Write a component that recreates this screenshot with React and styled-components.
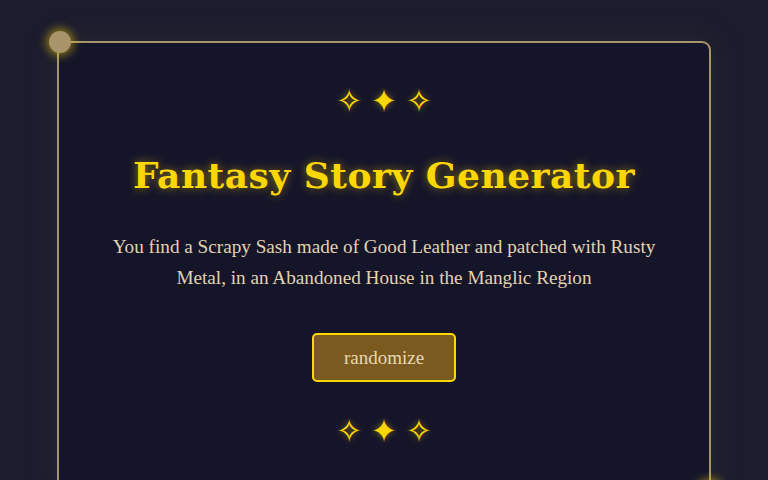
import styled, { createGlobalStyle } from "styled-components";

const Global = createGlobalStyle`
  html, body {
    margin: 0;
    padding: 0;
    background: #1c1c2e;
    height: 100%;
    overflow: hidden;
  }
  body {
    font-family: "Liberation Serif", Georgia, serif;
  }
`

const Page = styled.div`
  padding: 41px 57px 0;
`

const Card = styled.div`
  position: relative;
  background: #15152a;
  border: 2px solid #a8946a;
  border-radius: 9px;
  padding: 42px 40px 44px;
  box-shadow: 0 0 30px rgba(60, 55, 50, 0.45);
  text-align: center;
`

const Dot = styled.span`
  position: absolute;
  width: 22px;
  height: 22px;
  border-radius: 50%;
  background: ${p => p.$corner === "tl" ? "#a8946a" : "#c9a838"};
  box-shadow: 0 0 8px 3px rgba(255, 215, 0, 0.45);
  ${p => p.$corner === "tl" ? "top: -12px; left: -10px;" : "bottom: -12px; right: -12px;"}
`

const Stars = styled.div`
  display: flex;
  justify-content: center;
  align-items: center;
  gap: 8px;
  margin-top: ${p => p.$gap || 0}px;
  font-family: "DejaVu Sans", sans-serif;
  font-size: 32px;
  line-height: 32px;
  color: #ffd700;
  text-shadow: 0 0 6px rgba(255, 215, 0, 0.5);
`

const Title = styled.h1`
  margin: 37px 0 0;
  font-family: "DejaVu Serif", serif;
  font-weight: bold;
  font-size: 36px;
  line-height: 42px;
  letter-spacing: 0.5px;
  color: #ffd700;
  text-shadow: 0 0 10px rgba(255, 215, 0, 0.5);
`

const Story = styled.p`
  margin: 35px auto 0;
  font-size: 19.2px;
  line-height: 31px;
  color: #e2d2b0;
`

const Button = styled.button`
  display: block;
  margin: 40px auto 0;
  width: 144px;
  height: 49px;
  background: #7b5a1f;
  border: 2px solid #ffd700;
  border-radius: 5px;
  font-family: "Liberation Serif", serif;
  font-size: 19px;
  color: #e8d8b4;
  cursor: pointer;
`

function StarRow({ gap }) {
  return (
    <Stars $gap={gap}>
      <span>✧</span>
      <span>✦</span>
      <span>✧</span>
    </Stars>
  )
}

export default function App() {
  return (
    <Page>
      <Global />
      <Card>
        <Dot $corner="tl" />
        <Dot $corner="br" />
        <StarRow />
        <Title>Fantasy Story Generator</Title>
        <Story>
          You find a Scrapy Sash made of Good Leather and patched with Rusty
          Metal, in an Abandoned House in the Manglic Region
        </Story>
        <Button>randomize</Button>
        <StarRow gap={33} />
      </Card>
    </Page>
  );
}
